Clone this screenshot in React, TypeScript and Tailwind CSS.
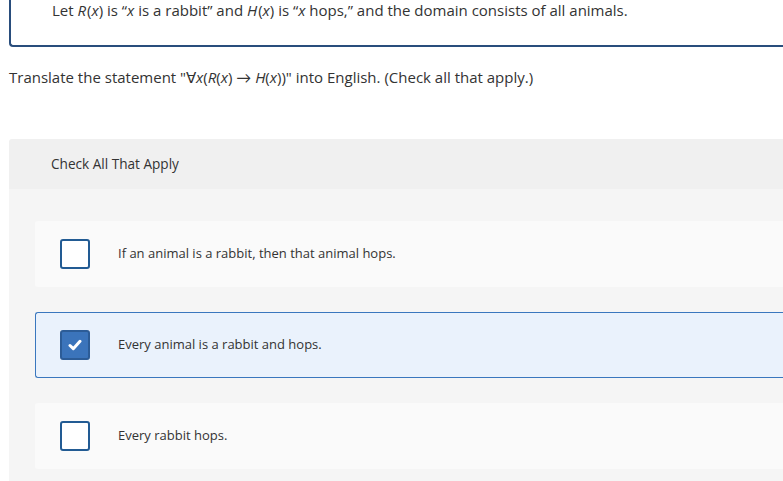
import React from 'react';

const options = [
  { id: 1, text: 'If an animal is a rabbit, then that animal hops.', checked: false },
  { id: 2, text: 'Every animal is a rabbit and hops.', checked: true },
  { id: 3, text: 'Every rabbit hops.', checked: false },
];

function Checkbox({ checked }: { checked: boolean }) {
  if (checked) {
    return (
      <div className="w-[30px] h-[30px] shrink-0 rounded-[3px] border-2 border-[#2c5c97] bg-[#3b74bb] flex items-center justify-center">
        <svg className="w-[14px] h-[12px]" viewBox="0 0 14 12" fill="none">
          <path d="M2 6.5l3.3 3.2L12 2.3" stroke="white" strokeWidth={3} strokeLinecap="round" strokeLinejoin="round" />
        </svg>
      </div>
    );
  }
  return <div className="w-[30px] h-[30px] shrink-0 rounded-[3px] border-2 border-[#225b93] bg-white" />;
}

export default function App() {
  return (
    <div className="w-[783px] h-[481px] overflow-hidden bg-white text-[#333] font-['Open_Sans','Lato',sans-serif]">
      {/* Prompt box */}
      <div className="ml-[9px] h-[47px] border-l-2 border-b-2 border-[#294d7c] rounded-bl-[4px] pl-[41px] text-[15px] leading-[20px] whitespace-nowrap">
        Let <i className="pr-[1px]">R</i>(<i>x</i>) is “<i>x</i> is a rabbit” and <i className="pr-[1px]">H</i>(<i>x</i>) is “<i>x</i> hops,” and the domain consists of all animals.
      </div>

      {/* Question */}
      <div className="mt-[20px] pl-[9px] text-[15px] leading-[20px] whitespace-nowrap">
        Translate the statement "∀<i>x</i>(<i>R</i>(<i>x</i>) → <i>H</i>(<i>x</i>))" into English. (Check all that apply.)
      </div>

      {/* Answer panel */}
      <div className="mt-[52px] ml-[9px]">
        <div className="h-[50px] bg-[#f0f0f0] rounded-tl-[3px] pl-[42px] flex items-center text-[13.6px] text-[#333]">
          Check All That Apply
        </div>
        <div className="bg-[#f5f5f5] pt-[32px] pl-[26px] pb-[20px] flex flex-col gap-[25px]">
          {options.map((opt) => (
            <div
              key={opt.id}
              className={
                opt.checked
                  ? 'h-[66px] rounded-l-[3px] border border-r-0 border-[#3a77be] bg-[#eaf2fc] pl-[24px] flex items-center gap-[28px]'
                  : 'h-[66px] rounded-l-[3px] bg-[#fafafa] pl-[25px] flex items-center gap-[28px]'
              }
            >
              <Checkbox checked={opt.checked} />
              <span className="text-[13px] text-[#333]">{opt.text}</span>
            </div>
          ))}
        </div>
      </div>
    </div>
  );
}
